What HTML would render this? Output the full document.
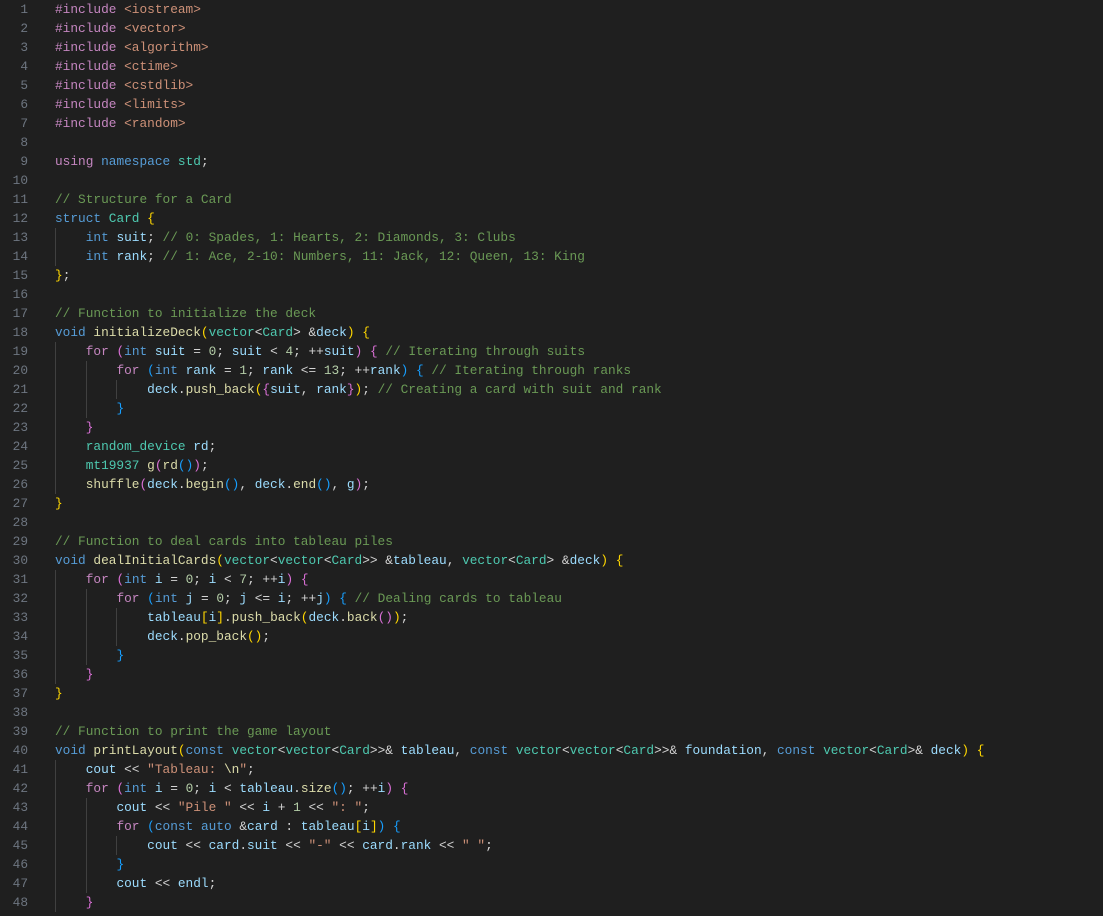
<!DOCTYPE html><html><head><style>
body{margin:0;background:#1f1f1f;width:1103px;height:916px;overflow:hidden;font-family:"Liberation Mono",monospace;font-size:12.8px;color:#d4d4d4}
.l{height:19px;line-height:19px;white-space:pre;position:relative}
.n{position:absolute;left:0;width:28px;text-align:right;color:#6e7681}
.c0{position:absolute;left:55px}
i{display:inline-block;width:30.72px;height:19px;vertical-align:top;box-shadow:inset 1px 0 0 #404040}
.k{color:#569cd6}.c{color:#c586c0}.t{color:#4ec9b0}.f{color:#dcdcaa}.v{color:#9cdcfe}.s{color:#ce9178}.m{color:#6a9955}.u{color:#b5cea8}.y{color:#ffd700}.p{color:#da70d6}.b{color:#179fff}
</style></head><body>
<div class="l"><span class="n">1</span><span class="c0"><span class="c">#include</span> <span class="s">&lt;iostream&gt;</span></span></div>
<div class="l"><span class="n">2</span><span class="c0"><span class="c">#include</span> <span class="s">&lt;vector&gt;</span></span></div>
<div class="l"><span class="n">3</span><span class="c0"><span class="c">#include</span> <span class="s">&lt;algorithm&gt;</span></span></div>
<div class="l"><span class="n">4</span><span class="c0"><span class="c">#include</span> <span class="s">&lt;ctime&gt;</span></span></div>
<div class="l"><span class="n">5</span><span class="c0"><span class="c">#include</span> <span class="s">&lt;cstdlib&gt;</span></span></div>
<div class="l"><span class="n">6</span><span class="c0"><span class="c">#include</span> <span class="s">&lt;limits&gt;</span></span></div>
<div class="l"><span class="n">7</span><span class="c0"><span class="c">#include</span> <span class="s">&lt;random&gt;</span></span></div>
<div class="l"><span class="n">8</span></div>
<div class="l"><span class="n">9</span><span class="c0"><span class="c">using</span> <span class="k">namespace</span> <span class="t">std</span>;</span></div>
<div class="l"><span class="n">10</span></div>
<div class="l"><span class="n">11</span><span class="c0"><span class="m">// Structure for a Card</span></span></div>
<div class="l"><span class="n">12</span><span class="c0"><span class="k">struct</span> <span class="t">Card</span> <span class="y">{</span></span></div>
<div class="l"><span class="n">13</span><span class="c0"><i></i><span class="k">int</span> <span class="v">suit</span>; <span class="m">// 0: Spades, 1: Hearts, 2: Diamonds, 3: Clubs</span></span></div>
<div class="l"><span class="n">14</span><span class="c0"><i></i><span class="k">int</span> <span class="v">rank</span>; <span class="m">// 1: Ace, 2-10: Numbers, 11: Jack, 12: Queen, 13: King</span></span></div>
<div class="l"><span class="n">15</span><span class="c0"><span class="y">}</span>;</span></div>
<div class="l"><span class="n">16</span></div>
<div class="l"><span class="n">17</span><span class="c0"><span class="m">// Function to initialize the deck</span></span></div>
<div class="l"><span class="n">18</span><span class="c0"><span class="k">void</span> <span class="f">initializeDeck</span><span class="y">(</span><span class="t">vector</span>&lt;<span class="t">Card</span>&gt; &amp;<span class="v">deck</span><span class="y">)</span> <span class="y">{</span></span></div>
<div class="l"><span class="n">19</span><span class="c0"><i></i><span class="c">for</span> <span class="p">(</span><span class="k">int</span> <span class="v">suit</span> = <span class="u">0</span>; <span class="v">suit</span> &lt; <span class="u">4</span>; ++<span class="v">suit</span><span class="p">)</span> <span class="p">{</span> <span class="m">// Iterating through suits</span></span></div>
<div class="l"><span class="n">20</span><span class="c0"><i></i><i></i><span class="c">for</span> <span class="b">(</span><span class="k">int</span> <span class="v">rank</span> = <span class="u">1</span>; <span class="v">rank</span> &lt;= <span class="u">13</span>; ++<span class="v">rank</span><span class="b">)</span> <span class="b">{</span> <span class="m">// Iterating through ranks</span></span></div>
<div class="l"><span class="n">21</span><span class="c0"><i></i><i></i><i></i><span class="v">deck</span>.<span class="f">push_back</span><span class="y">(</span><span class="p">{</span><span class="v">suit</span>, <span class="v">rank</span><span class="p">}</span><span class="y">)</span>; <span class="m">// Creating a card with suit and rank</span></span></div>
<div class="l"><span class="n">22</span><span class="c0"><i></i><i></i><span class="b">}</span></span></div>
<div class="l"><span class="n">23</span><span class="c0"><i></i><span class="p">}</span></span></div>
<div class="l"><span class="n">24</span><span class="c0"><i></i><span class="t">random_device</span> <span class="v">rd</span>;</span></div>
<div class="l"><span class="n">25</span><span class="c0"><i></i><span class="t">mt19937</span> <span class="f">g</span><span class="p">(</span><span class="f">rd</span><span class="b">()</span><span class="p">)</span>;</span></div>
<div class="l"><span class="n">26</span><span class="c0"><i></i><span class="f">shuffle</span><span class="p">(</span><span class="v">deck</span>.<span class="f">begin</span><span class="b">()</span>, <span class="v">deck</span>.<span class="f">end</span><span class="b">()</span>, <span class="v">g</span><span class="p">)</span>;</span></div>
<div class="l"><span class="n">27</span><span class="c0"><span class="y">}</span></span></div>
<div class="l"><span class="n">28</span></div>
<div class="l"><span class="n">29</span><span class="c0"><span class="m">// Function to deal cards into tableau piles</span></span></div>
<div class="l"><span class="n">30</span><span class="c0"><span class="k">void</span> <span class="f">dealInitialCards</span><span class="y">(</span><span class="t">vector</span>&lt;<span class="t">vector</span>&lt;<span class="t">Card</span>&gt;&gt; &amp;<span class="v">tableau</span>, <span class="t">vector</span>&lt;<span class="t">Card</span>&gt; &amp;<span class="v">deck</span><span class="y">)</span> <span class="y">{</span></span></div>
<div class="l"><span class="n">31</span><span class="c0"><i></i><span class="c">for</span> <span class="p">(</span><span class="k">int</span> <span class="v">i</span> = <span class="u">0</span>; <span class="v">i</span> &lt; <span class="u">7</span>; ++<span class="v">i</span><span class="p">)</span> <span class="p">{</span></span></div>
<div class="l"><span class="n">32</span><span class="c0"><i></i><i></i><span class="c">for</span> <span class="b">(</span><span class="k">int</span> <span class="v">j</span> = <span class="u">0</span>; <span class="v">j</span> &lt;= <span class="v">i</span>; ++<span class="v">j</span><span class="b">)</span> <span class="b">{</span> <span class="m">// Dealing cards to tableau</span></span></div>
<div class="l"><span class="n">33</span><span class="c0"><i></i><i></i><i></i><span class="v">tableau</span><span class="y">[</span><span class="v">i</span><span class="y">]</span>.<span class="f">push_back</span><span class="y">(</span><span class="v">deck</span>.<span class="f">back</span><span class="p">()</span><span class="y">)</span>;</span></div>
<div class="l"><span class="n">34</span><span class="c0"><i></i><i></i><i></i><span class="v">deck</span>.<span class="f">pop_back</span><span class="y">()</span>;</span></div>
<div class="l"><span class="n">35</span><span class="c0"><i></i><i></i><span class="b">}</span></span></div>
<div class="l"><span class="n">36</span><span class="c0"><i></i><span class="p">}</span></span></div>
<div class="l"><span class="n">37</span><span class="c0"><span class="y">}</span></span></div>
<div class="l"><span class="n">38</span></div>
<div class="l"><span class="n">39</span><span class="c0"><span class="m">// Function to print the game layout</span></span></div>
<div class="l"><span class="n">40</span><span class="c0"><span class="k">void</span> <span class="f">printLayout</span><span class="y">(</span><span class="k">const</span> <span class="t">vector</span>&lt;<span class="t">vector</span>&lt;<span class="t">Card</span>&gt;&gt;&amp; <span class="v">tableau</span>, <span class="k">const</span> <span class="t">vector</span>&lt;<span class="t">vector</span>&lt;<span class="t">Card</span>&gt;&gt;&amp; <span class="v">foundation</span>, <span class="k">const</span> <span class="t">vector</span>&lt;<span class="t">Card</span>&gt;&amp; <span class="v">deck</span><span class="y">)</span> <span class="y">{</span></span></div>
<div class="l"><span class="n">41</span><span class="c0"><i></i><span class="v">cout</span> &lt;&lt; <span class="s">"Tableau: </span><span class="f">\n</span><span class="s">"</span>;</span></div>
<div class="l"><span class="n">42</span><span class="c0"><i></i><span class="c">for</span> <span class="p">(</span><span class="k">int</span> <span class="v">i</span> = <span class="u">0</span>; <span class="v">i</span> &lt; <span class="v">tableau</span>.<span class="f">size</span><span class="b">()</span>; ++<span class="v">i</span><span class="p">)</span> <span class="p">{</span></span></div>
<div class="l"><span class="n">43</span><span class="c0"><i></i><i></i><span class="v">cout</span> &lt;&lt; <span class="s">"Pile "</span> &lt;&lt; <span class="v">i</span> + <span class="u">1</span> &lt;&lt; <span class="s">": "</span>;</span></div>
<div class="l"><span class="n">44</span><span class="c0"><i></i><i></i><span class="c">for</span> <span class="b">(</span><span class="k">const</span> <span class="k">auto</span> &amp;<span class="v">card</span> : <span class="v">tableau</span><span class="y">[</span><span class="v">i</span><span class="y">]</span><span class="b">)</span> <span class="b">{</span></span></div>
<div class="l"><span class="n">45</span><span class="c0"><i></i><i></i><i></i><span class="v">cout</span> &lt;&lt; <span class="v">card</span>.<span class="v">suit</span> &lt;&lt; <span class="s">"-"</span> &lt;&lt; <span class="v">card</span>.<span class="v">rank</span> &lt;&lt; <span class="s">" "</span>;</span></div>
<div class="l"><span class="n">46</span><span class="c0"><i></i><i></i><span class="b">}</span></span></div>
<div class="l"><span class="n">47</span><span class="c0"><i></i><i></i><span class="v">cout</span> &lt;&lt; <span class="v">endl</span>;</span></div>
<div class="l"><span class="n">48</span><span class="c0"><i></i><span class="p">}</span></span></div>
</body></html>
